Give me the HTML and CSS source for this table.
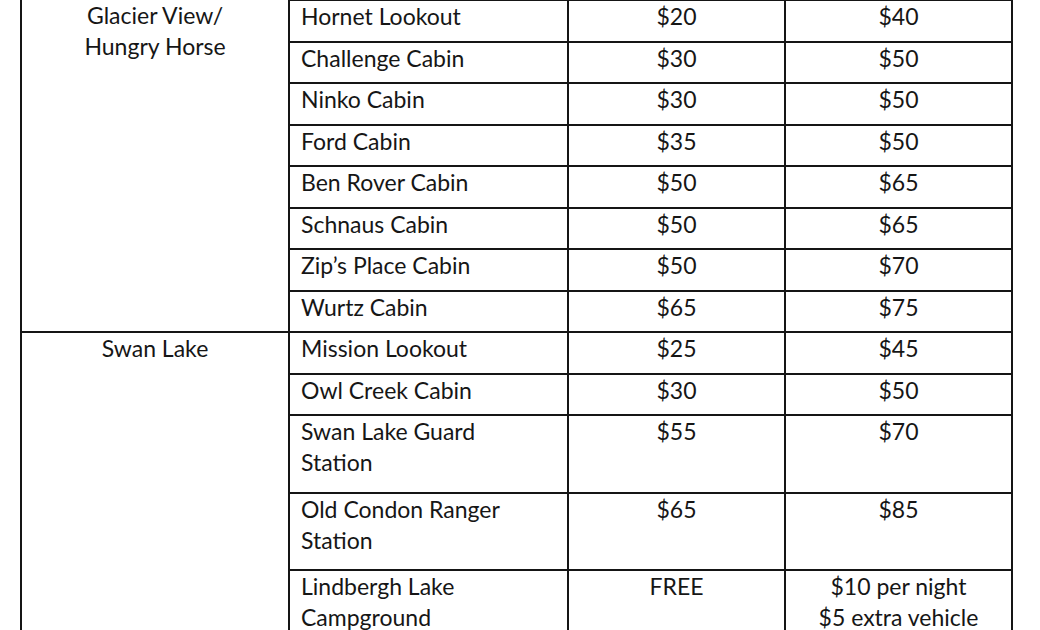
FILE: index.html
```html
<!DOCTYPE html>
<html>
<head>
<meta charset="utf-8">
<link rel="stylesheet" href="styles.css">
</head>
<body>
<div class="page">
<table class="fees">
  <colgroup>
    <col class="c-area"><col class="c-name"><col class="c-low"><col class="c-high">
  </colgroup>
  <tbody>
    <tr class="one">
      <td class="area first" rowspan="8">Glacier View/<br>Hungry Horse</td>
      <td class="name">Hornet Lookout</td><td class="price">$20</td><td class="price">$40</td>
    </tr>
    <tr class="one"><td class="name">Challenge Cabin</td><td class="price">$30</td><td class="price">$50</td></tr>
    <tr class="one"><td class="name">Ninko Cabin</td><td class="price">$30</td><td class="price">$50</td></tr>
    <tr class="one"><td class="name">Ford Cabin</td><td class="price">$35</td><td class="price">$50</td></tr>
    <tr class="one"><td class="name">Ben Rover Cabin</td><td class="price">$50</td><td class="price">$65</td></tr>
    <tr class="one"><td class="name">Schnaus Cabin</td><td class="price">$50</td><td class="price">$65</td></tr>
    <tr class="one"><td class="name">Zip’s Place Cabin</td><td class="price">$50</td><td class="price">$70</td></tr>
    <tr class="one"><td class="name">Wurtz Cabin</td><td class="price">$65</td><td class="price">$75</td></tr>
    <tr class="one">
      <td class="area" rowspan="5">Swan Lake</td>
      <td class="name">Mission Lookout</td><td class="price">$25</td><td class="price">$45</td>
    </tr>
    <tr class="one"><td class="name">Owl Creek Cabin</td><td class="price">$30</td><td class="price">$50</td></tr>
    <tr class="two"><td class="name">Swan Lake Guard<br>Station</td><td class="price">$55</td><td class="price">$70</td></tr>
    <tr class="two"><td class="name">Old Condon Ranger<br>Station</td><td class="price">$65</td><td class="price">$85</td></tr>
    <tr class="two"><td class="name">Lindbergh Lake<br>Campground</td><td class="price">FREE</td><td class="price">$10 per night<br>$5 extra vehicle</td></tr>
  </tbody>
</table>
</div>
</body>
</html>
```
FILE: styles.css
```css
html, body {
  margin: 0;
  padding: 0;
  background: #ffffff;
}
.page {
  width: 1040px;
  height: 630px;
  overflow: hidden;
  padding: 0 0 0 20px;
  box-sizing: border-box;
}
.fees {
  border-collapse: collapse;
  table-layout: fixed;
  width: 993px;
  margin-top: -1px;
  font-family: Lato, "Open Sans", sans-serif;
  font-size: 23px;
  line-height: 31px;
  color: #161616;
}
.c-area { width: 268px; }
.c-name { width: 279px; }
.c-low { width: 217px; }
.c-high { width: 227px; }
.fees td {
  border: 2px solid #151515;
  padding: 0 11px 0 11px;
  vertical-align: top;
}
.fees td.first {
  border-top: hidden;
}
.one { height: 41.5px; }
.two { height: 77.5px; }
.area, .price { text-align: center; }
.name { text-align: left; }
```
